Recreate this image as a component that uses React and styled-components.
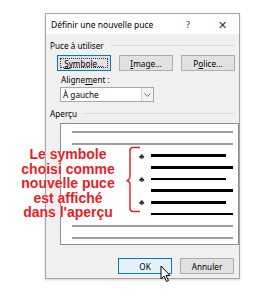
import React from "react";
import styled, { createGlobalStyle } from "styled-components";

const GlobalStyle = createGlobalStyle`
  html, body {
    margin: 0;
    padding: 0;
    background: #ffffff;
  }
  body {
    font-family: "Noto Sans", "Open Sans", sans-serif;
    color: #000;
  }
`;

const Stage = styled.div`
  position: relative;
  width: 278px;
  height: 300px;
  padding: 13px 0 0 45px;
  box-sizing: border-box;
  overflow: hidden;
`;

const Watermark = styled.div`
  position: absolute;
  left: 8px;
  top: 98px;
  font-family: "Liberation Sans", Arial, sans-serif;
  font-size: 40px;
  color: rgba(0, 0, 0, 0.025);
  transform: rotate(-8deg);
`;

const Dialog = styled.div`
  position: relative;
  width: 195px;
  height: 266px;
  box-sizing: border-box;
  border: 1px solid #a3a3a3;
  box-shadow: 0 1px 2px rgba(0, 0, 0, 0.18);
  background: #f0f0f0;
  display: flex;
  flex-direction: column;
  font-size: 8.2px;
  white-space: nowrap;
`;

const TitleBar = styled.div`
  height: 20px;
  background: #fff;
  display: flex;
  align-items: center;
  padding: 0 0 0 5px;
  font-size: 8.5px;
`;

const Title = styled.span`
  flex: 1;
`;

const TitleIcon = styled.span`
  width: 34px;
  text-align: center;
  font-size: ${(p) => p.$size || 9}px;
  color: #333;
`;

const Body = styled.div`
  flex: 1;
  display: flex;
  flex-direction: column;
  padding: 6px 4px 0 4px;
`;

const GroupLabel = styled.div`
  display: flex;
  align-items: center;
  gap: 6px;
  height: 11px;
  margin-top: ${(p) => p.$top || 0}px;
  &::after {
    content: "";
    flex: 1;
    height: 1px;
    background: #dcdcdc;
  }
`;

const ButtonRow = styled.div`
  display: flex;
  gap: 8px;
  margin-top: ${(p) => p.$top || 0}px;
  padding-left: ${(p) => p.$left || 0}px;
  justify-content: ${(p) => p.$justify || "flex-start"};
  padding-right: ${(p) => p.$right || 0}px;
`;

const Button = styled.div`
  position: relative;
  width: 54px;
  height: 16px;
  box-sizing: border-box;
  border: 1px solid ${(p) => (p.$focus ? "#0078d7" : "#adadad")};
  background: ${(p) => (p.$default ? "#e5f1fb" : "#e1e1e1")};
  display: flex;
  align-items: center;
  justify-content: center;
  ${(p) =>
    p.$dotted &&
    `&::before {
      content: "";
      position: absolute;
      inset: 2px;
      border: 1px dotted #333;
    }`}
`;

const U = styled.span`
  text-decoration: underline;
`;

const FieldLabel = styled.div`
  height: 11px;
  line-height: 11px;
  margin: 3px 0 0 11px;
`;

const Select = styled.div`
  width: 94px;
  height: 15px;
  box-sizing: border-box;
  margin: 2px 0 0 10px;
  border: 1px solid #a8a8a8;
  background: #fff;
  display: flex;
  align-items: stretch;
`;

const SelectValue = styled.span`
  flex: 1;
  padding-left: 2px;
  line-height: 13px;
`;

const SelectArrow = styled.span`
  width: 11px;
  border-left: 1px solid #cfcfcf;
  background: #f3f3f3;
  display: flex;
  align-items: center;
  justify-content: center;
`;

const Preview = styled.div`
  position: relative;
  margin: 4px 0 0 10px;
  width: 179px;
  height: 122px;
  box-sizing: border-box;
  border: 1px solid #8c8c8c;
  background: #fff;
  padding: 2.5px 0 0 0;
  display: grid;
  grid-auto-rows: 11.7px;
`;

const PreviewRow = styled.div`
  display: flex;
  align-items: center;
  padding-left: ${(p) => (p.$bullet ? 78 : 11)}px;
  padding-right: ${(p) => (p.$short ? 12 : 5)}px;
`;

const Bullet = styled.span`
  width: 12px;
  font-size: 8px;
  line-height: 1;
  color: #222;
`;

const Line = styled.span`
  flex: 1;
  height: ${(p) => (p.$dark ? 2.6 : 2)}px;
  background: ${(p) => (p.$dark ? "#000" : "#a0a0a0")};
  margin-left: ${(p) => (p.$pad ? 12 : 0)}px;
`;

const Annotation = styled.div`
  position: absolute;
  left: 8px;
  top: 147px;
  width: 120px;
  text-align: center;
  font-family: "Liberation Sans", Arial, sans-serif;
  font-weight: bold;
  font-size: 14px;
  line-height: 14.6px;
  color: #ec1c24;
  text-shadow: 0 0 1px #fff, 0 0 1px #fff;
`;

const Brace = styled.svg`
  position: absolute;
  left: 125px;
  top: 146px;
`;

const Cursor = styled.svg`
  position: absolute;
  left: 160px;
  top: 265px;
`;

const rows = [
  { kind: "grey" },
  { kind: "grey" },
  { kind: "bullet" },
  { kind: "black" },
  { kind: "bullet" },
  { kind: "black" },
  { kind: "bullet" },
  { kind: "black" },
  { kind: "grey" },
  { kind: "grey" },
];

export default function App() {
  return (
    <>
      <GlobalStyle />
      <Stage>
        <Watermark>Off</Watermark>
        <Dialog>
          <TitleBar>
            <Title>Définir une nouvelle puce</Title>
            <TitleIcon>?</TitleIcon>
            <TitleIcon $size={11}>✕</TitleIcon>
          </TitleBar>
          <Body>
            <GroupLabel>Puce à utiliser</GroupLabel>
            <ButtonRow $top={4} $left={7}>
              <Button $focus $dotted>
                <span>
                  <U>S</U>ymbole...
                </span>
              </Button>
              <Button>
                <span>
                  <U>I</U>mage...
                </span>
              </Button>
              <Button>
                <span>
                  P<U>o</U>lice...
                </span>
              </Button>
            </ButtonRow>
            <FieldLabel>
              Aligne<U>m</U>ent :
            </FieldLabel>
            <Select>
              <SelectValue>À gauche</SelectValue>
              <SelectArrow>
                <svg width="7" height="4" viewBox="0 0 7 4">
                  <path d="M0.5 0.5 L3.5 3.3 L6.5 0.5" fill="none" stroke="#606060" strokeWidth="0.9" />
                </svg>
              </SelectArrow>
            </Select>
            <GroupLabel $top={6}>Aperçu</GroupLabel>
            <Preview>
              {rows.map((r, i) =>
                r.kind === "bullet" ? (
                  <PreviewRow key={i} $bullet $short>
                    <Bullet>♣</Bullet>
                    <Line $dark />
                  </PreviewRow>
                ) : r.kind === "black" ? (
                  <PreviewRow key={i} $bullet>
                    <Line $dark $pad />
                  </PreviewRow>
                ) : (
                  <PreviewRow key={i}>
                    <Line />
                  </PreviewRow>
                )
              )}
            </Preview>
            <ButtonRow $top={13} $justify="flex-end" $right={1}>
              <Button $focus $default>OK</Button>
              <Button>Annuler</Button>
            </ButtonRow>
          </Body>
        </Dialog>

        <Annotation>
          Le symbole
          <br />
          choisi comme
          <br />
          nouvelle puce
          <br />
          est affiché
          <br />
          dans l'aperçu
        </Annotation>

        <Brace width="16" height="68" viewBox="0 0 16 68">
          <path
            d="M15 1.5 H8 Q5 1.5 5 4.5 V30 Q5 34 1.5 34.5 Q5 35 5 39 V62.5 Q5 65.5 8 65.5 H15"
            fill="none"
            stroke="#ec1c24"
            strokeWidth="1.4"
          />
        </Brace>

        <Cursor width="12" height="18" viewBox="0 0 12 18">
          <path
            d="M1 1 V14 L4 11 L6.5 16.5 L8.5 15.5 L6 10.5 H10 Z"
            fill="#fff"
            stroke="#000"
            strokeWidth="1"
            strokeLinejoin="round"
          />
        </Cursor>
      </Stage>
    </>
  );
}
